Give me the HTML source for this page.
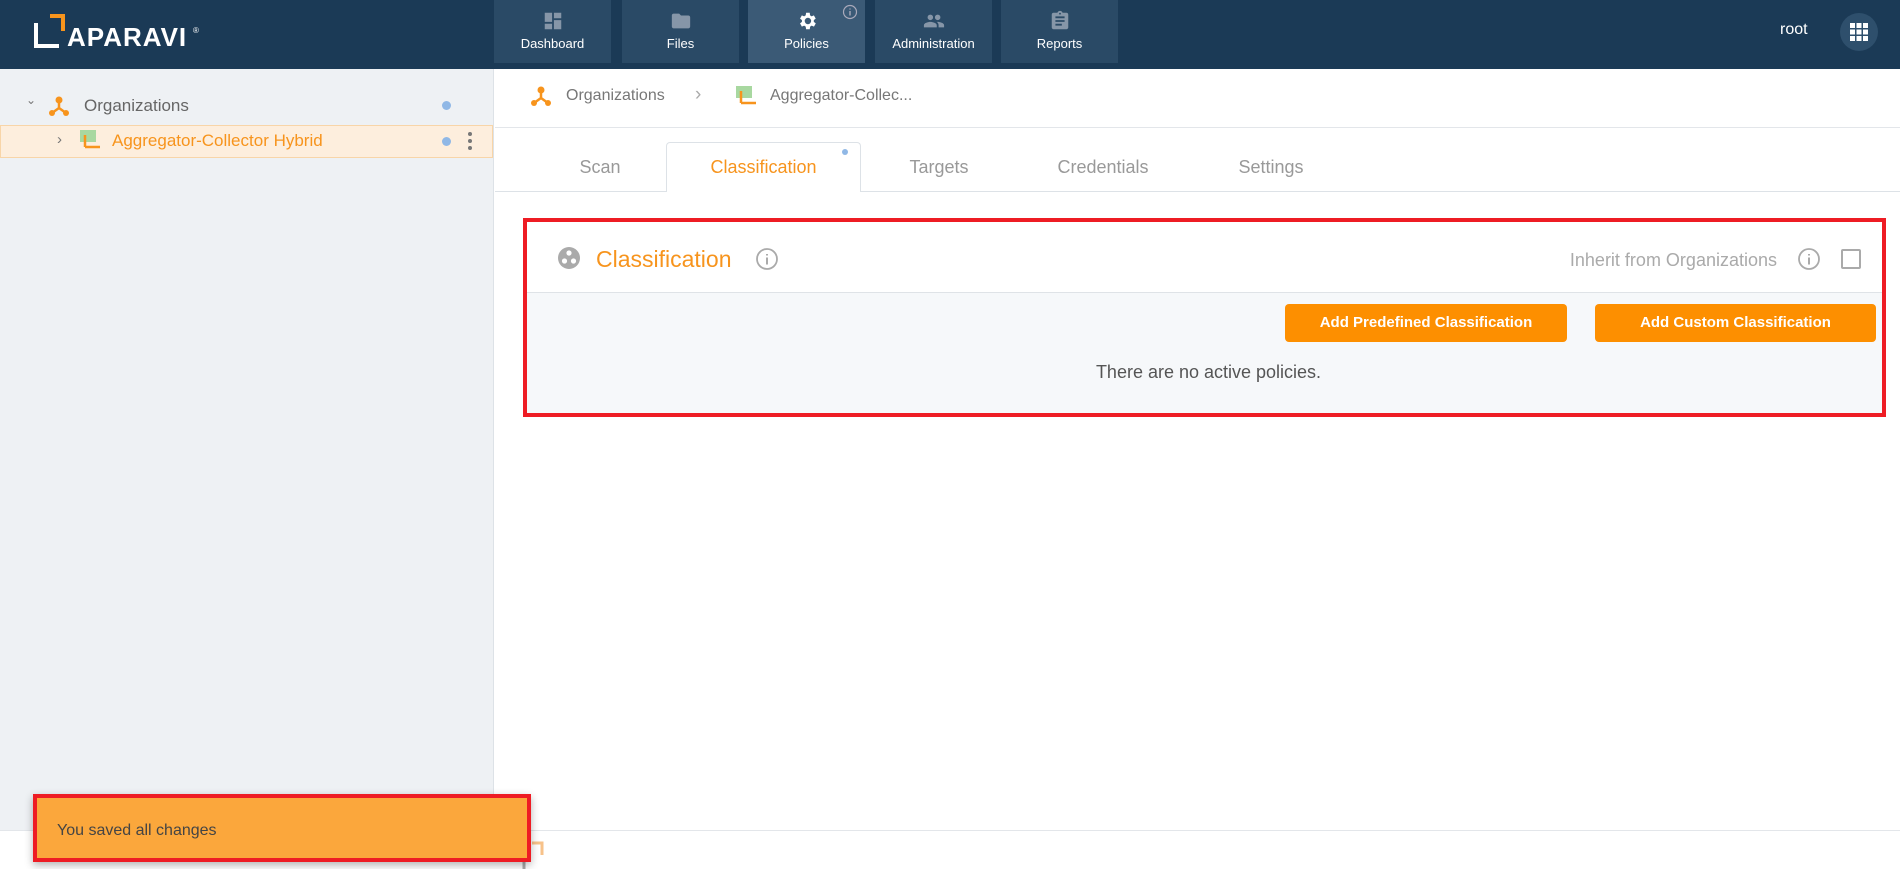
<!DOCTYPE html>
<html><head><meta charset="utf-8"><style>
*{box-sizing:border-box;margin:0;padding:0}
body{width:1900px;height:868px;overflow:hidden;font-family:"Liberation Sans",sans-serif;background:#fff;position:relative}
.hdr{position:absolute;left:0;top:0;width:1900px;height:69px;background:#1b3a56}
.nav{position:absolute;top:0;height:63px;width:117px;background:#2a4a66;color:#fff;font-size:13px;text-align:center}
.nav svg{display:block;margin:10px auto 4px}
.nav.act{background:#3b5a76}
.side{position:absolute;left:0;top:69px;width:494px;height:761px;background:#eef1f4;border-right:1px solid #dde2e7}
.foot{position:absolute;left:0;top:830px;width:1900px;height:38px;background:#fff;border-top:1px solid #e3e6ea}
.dot{position:absolute;width:9px;height:9px;border-radius:50%;background:#90b8e6}
.tab{position:absolute;top:142px;height:50px;line-height:50px;font-size:18px;color:#999;text-align:center}
.btn{position:absolute;top:304px;height:38px;background:#fd8f00;color:#fff;font-weight:bold;font-size:15px;text-align:center;line-height:38px;border-radius:4px}
</style></head><body>
<div class="hdr">
 <svg style="position:absolute;left:33px;top:13px" width="170" height="36" viewBox="0 0 170 36">
  <path d="M3 10V33H26" fill="none" stroke="#fff" stroke-width="4"/>
  <path d="M17 3H30V18" fill="none" stroke="#f7941d" stroke-width="4"/>
  <text x="34" y="33" fill="#fff" font-family="Liberation Sans" font-size="26" font-weight="bold" letter-spacing="1">APARAVI</text>
  <text x="160" y="20" fill="#fff" font-size="8">®</text>
 </svg>
 <div class="nav" style="left:494px"><svg width="22" height="22" viewBox="0 0 24 24"><path fill="#8696a8" d="M3 13h8V3H3zm0 8h8v-6H3zm10 0h8V11h-8zm0-18v6h8V3z"/></svg>Dashboard</div>
 <div class="nav" style="left:622px"><svg width="22" height="22" viewBox="0 0 24 24"><path fill="#8696a8" d="M10 4H4c-1.1 0-2 .9-2 2v12c0 1.1.9 2 2 2h16c1.1 0 2-.9 2-2V8c0-1.1-.9-2-2-2h-8z"/></svg>Files</div>
 <div class="nav act" style="left:748px"><svg width="22" height="22" viewBox="0 0 24 24"><path fill="#fff" d="M19.4 13a7.5 7.5 0 0 0 0-2l2.1-1.6-2-3.5-2.5 1a7 7 0 0 0-1.7-1L15 3h-4l-.4 2.9a7 7 0 0 0-1.7 1l-2.5-1-2 3.5L6.5 11a7.5 7.5 0 0 0 0 2l-2.1 1.6 2 3.5 2.5-1a7 7 0 0 0 1.7 1L11 21h4l.4-2.9a7 7 0 0 0 1.7-1l2.5 1 2-3.5zM13 15.5a3.5 3.5 0 1 1 0-7 3.5 3.5 0 0 1 0 7z"/></svg>Policies
  <svg style="position:absolute;left:94px;top:4px;margin:0" width="16" height="16" viewBox="0 0 16 16"><circle cx="8" cy="8" r="6.5" fill="none" stroke="#aab" stroke-width="1.2"/><path d="M8 7v4.5M8 4.5v1" stroke="#aab" stroke-width="1.4"/></svg></div>
 <div class="nav" style="left:875px"><svg width="22" height="22" viewBox="0 0 24 24"><path fill="#8696a8" d="M16 11a3 3 0 1 0 0-6 3 3 0 0 0 0 6zm-8 0a3 3 0 1 0 0-6 3 3 0 0 0 0 6zm0 2c-2.3 0-7 1.2-7 3.5V19h14v-2.5C15 14.2 10.3 13 8 13zm8 0h-1c1.2.8 2 2 2 3.5V19h6v-2.5c0-2.3-4.7-3.5-7-3.5z"/></svg>Administration</div>
 <div class="nav" style="left:1001px"><svg width="22" height="22" viewBox="0 0 24 24"><path fill="#8696a8" d="M19 3h-4.2C14.4 1.8 13.3 1 12 1s-2.4.8-2.8 2H5c-1.1 0-2 .9-2 2v14c0 1.1.9 2 2 2h14c1.1 0 2-.9 2-2V5c0-1.1-.9-2-2-2zm-7 0c.6 0 1 .4 1 1s-.4 1-1 1-1-.4-1-1 .4-1 1-1zm2 14H7v-2h7zm3-4H7v-2h10zm0-4H7V7h10z"/></svg>Reports</div>
 <div style="position:absolute;left:1780px;top:21px;color:#fff;font-size:16px">root</div>
 <div style="position:absolute;left:1840px;top:13px;width:38px;height:38px;border-radius:50%;background:#2e4f6c">
  <svg style="position:absolute;left:10px;top:10px" width="18" height="18" viewBox="0 0 18 18" fill="#fff"><rect x="0" y="0" width="5" height="5"/><rect x="6.5" y="0" width="5" height="5"/><rect x="13" y="0" width="5" height="5"/><rect x="0" y="6.5" width="5" height="5"/><rect x="6.5" y="6.5" width="5" height="5"/><rect x="13" y="6.5" width="5" height="5"/><rect x="0" y="13" width="5" height="5"/><rect x="6.5" y="13" width="5" height="5"/><rect x="13" y="13" width="5" height="5"/></svg></div>
</div>

<div class="side">
 <div style="position:absolute;left:26px;top:24px;font-size:12px;color:#777">⌄</div>
 <svg style="position:absolute;left:48px;top:26px" width="22" height="22" viewBox="0 0 22 22"><circle cx="11" cy="5" r="3.5" fill="#f7941d"/><circle cx="4" cy="18" r="3" fill="#f7941d"/><circle cx="18" cy="18" r="3" fill="#f7941d"/><path d="M11 8v5L4 18M11 13l7 5" stroke="#f7941d" stroke-width="2.5" fill="none"/></svg>
 <div style="position:absolute;left:84px;top:27px;font-size:17px;color:#666">Organizations</div>
 <div class="dot" style="left:442px;top:32px"></div>
 <div style="position:absolute;left:0;top:56px;width:493px;height:33px;background:#fdeedd;border:1px solid #f8d5a8"></div>
 <div style="position:absolute;left:57px;top:62px;font-size:15px;color:#777">›</div>
 <svg style="position:absolute;left:79px;top:60px" width="22" height="22" viewBox="0 0 22 22"><rect x="1" y="1" width="16" height="12" fill="#a8d8a0"/><path d="M6 18H21M6 18V6" stroke="#f7941d" stroke-width="2.5"/></svg>
 <div style="position:absolute;left:112px;top:62px;font-size:17px;color:#f7941d">Aggregator-Collector Hybrid</div>
 <div class="dot" style="left:442px;top:68px"></div>
 <div style="position:absolute;left:468px;top:63px;width:4px;height:4px;border-radius:50%;background:#777;box-shadow:0 7px #777,0 14px #777"></div>
</div>

<svg style="position:absolute;left:530px;top:85px" width="22" height="22" viewBox="0 0 22 22"><circle cx="11" cy="5" r="3.5" fill="#f7941d"/><circle cx="4" cy="18" r="3" fill="#f7941d"/><circle cx="18" cy="18" r="3" fill="#f7941d"/><path d="M11 8v5L4 18M11 13l7 5" stroke="#f7941d" stroke-width="2.5" fill="none"/></svg>
<div style="position:absolute;left:566px;top:87px;font-size:16px;color:#777">Organizations</div>
<div style="position:absolute;left:695px;top:84px;font-size:19px;color:#aaa">›</div>
<svg style="position:absolute;left:735px;top:85px" width="22" height="22" viewBox="0 0 22 22"><rect x="1" y="1" width="16" height="12" fill="#a8d8a0"/><path d="M6 18H21M6 18V6" stroke="#f7941d" stroke-width="2.5"/></svg>
<div style="position:absolute;left:770px;top:87px;font-size:16px;color:#777">Aggregator-Collec...</div>
<div style="position:absolute;left:495px;top:127px;width:1405px;height:1px;background:#e3e6ea"></div>

<div style="position:absolute;left:495px;top:191px;width:1405px;height:1px;background:#dde2e7"></div>
<div style="position:absolute;left:666px;top:142px;width:195px;height:50px;background:#fff;border:1px solid #dde2e7;border-bottom:none;border-radius:4px 4px 0 0"></div>
<div class="tab" style="left:550px;width:100px">Scan</div>
<div class="tab" style="left:666px;width:195px;color:#f7941d">Classification</div>
<div class="dot" style="left:842px;top:149px;width:6px;height:6px"></div>
<div class="tab" style="left:889px;width:100px">Targets</div>
<div class="tab" style="left:1043px;width:120px">Credentials</div>
<div class="tab" style="left:1221px;width:100px">Settings</div>

<div style="position:absolute;left:523px;top:218px;width:1363px;height:199px;border:4px solid #ee1c24;background:#f6f8fa">
 <div style="position:absolute;left:0;top:0;width:1355px;height:71px;background:#fff;border-bottom:1px solid #dfe3e7"></div>
 <svg style="position:absolute;left:30px;top:24px" width="24" height="24" viewBox="0 0 24 24"><circle cx="12" cy="12" r="11" fill="#aaa"/><circle cx="12" cy="7" r="2.6" fill="#fff"/><circle cx="7.5" cy="15" r="2.6" fill="#fff"/><circle cx="16.5" cy="15" r="2.6" fill="#fff"/></svg>
 <div style="position:absolute;left:69px;top:24px;font-size:23px;color:#f7941d">Classification</div>
 <svg style="position:absolute;left:228px;top:25px" width="24" height="24" viewBox="0 0 24 24"><circle cx="12" cy="12" r="10" fill="none" stroke="#aaa" stroke-width="1.8"/><path d="M12 10.5v7M12 7v1.5" stroke="#aaa" stroke-width="2"/></svg>
 <div style="position:absolute;right:105px;top:28px;font-size:18px;color:#aaa">Inherit from Organizations</div>
 <svg style="position:absolute;left:1270px;top:25px" width="24" height="24" viewBox="0 0 24 24"><circle cx="12" cy="12" r="10" fill="none" stroke="#aaa" stroke-width="1.8"/><path d="M12 10.5v7M12 7v1.5" stroke="#aaa" stroke-width="2"/></svg>
 <div style="position:absolute;left:1314px;top:27px;width:20px;height:20px;border:2px solid #aaa;border-radius:2px"></div>
 <div style="position:absolute;left:0;top:140px;width:1355px;text-align:center;font-size:18px;color:#555;padding-left:8px">There are no active policies.</div>
</div>
<div class="btn" style="left:1285px;width:282px">Add Predefined Classification</div>
<div class="btn" style="left:1595px;width:281px">Add Custom Classification</div>

<div class="foot">
 <div style="position:absolute;left:450px;top:16px;font-size:16px;color:#555">‹</div>
 <svg style="position:absolute;left:522px;top:10px" width="30" height="28" viewBox="0 0 30 28"><path d="M2 6V28" stroke="#aaa" stroke-width="3"/><path d="M10 2H20V14" fill="none" stroke="#f7c28a" stroke-width="3"/></svg>
</div>

<div style="position:absolute;left:33px;top:794px;width:498px;height:68px;background:#fba73c;border:4px solid #ee1c24;box-shadow:0 3px 8px rgba(0,0,0,.3)">
 <div style="position:absolute;left:20px;top:24px;font-size:16px;color:#444">You saved all changes</div>
</div>
</body></html>
